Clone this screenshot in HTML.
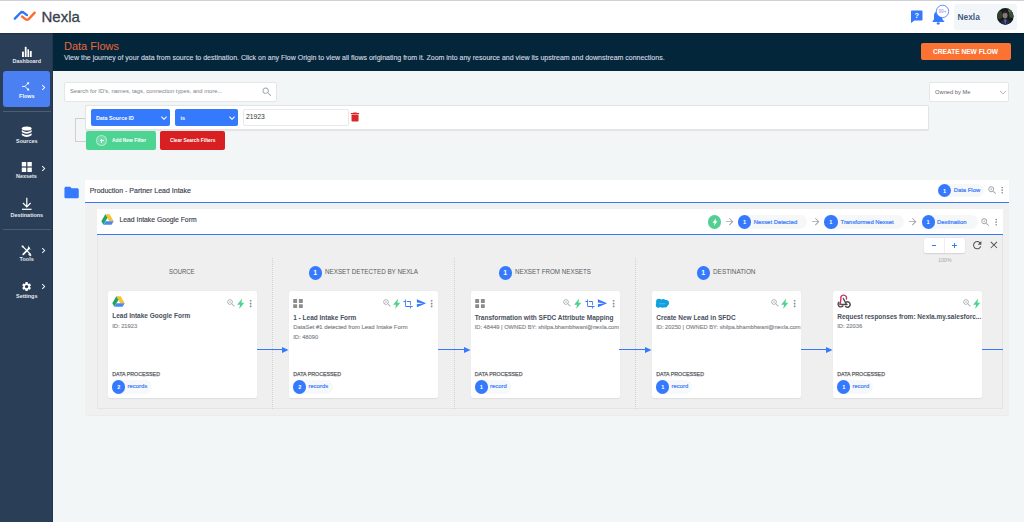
<!DOCTYPE html>
<html><head><meta charset="utf-8">
<style>
*{margin:0;padding:0;box-sizing:border-box}
html,body{width:1024px;height:522px;overflow:hidden;background:#f3f6f7;font-family:"Liberation Sans",sans-serif;position:relative}
.a{position:absolute}
.t{position:absolute;line-height:1;white-space:nowrap}
svg{position:absolute;overflow:visible}
</style></head><body>
<div class="a" style="left:0px;top:0px;width:1024px;height:1px;background:#cdd0d6;"></div>
<div class="a" style="left:0px;top:1px;width:1024px;height:32px;background:#fff;"></div>
<svg style="left:0px;top:0px;" width="40" height="30"><g fill="none" stroke-width="2.4" stroke-linecap="round" stroke-linejoin="round"><path d="M14.8 18.6 L20.3 13 Q22.1 11.3 24 12.9 L26.9 15.1" stroke="#2f74fd"/><path d="M22.1 16.5 L25.4 19.1 Q27.2 20.4 28.9 18.8 L34.7 12.7" stroke="#fd6e2e"/></g></svg>
<div class="t" style="left:41.5px;top:9px;font-size:15px;color:#3a3f4d;-webkit-text-stroke:0.3px #3a3f4d">Nexla</div>
<svg style="left:910px;top:10px;" width="14" height="14"><path d="M1.5 0.5 H11.5 Q12.5 0.5 12.5 1.5 V9.5 Q12.5 10.5 11.5 10.5 H4.5 L1 13 V1.5 Q1 0.5 1.5 0.5Z" fill="#3579fd"/><text x="6.8" y="8.3" font-size="7.5" font-weight="bold" fill="#fff" text-anchor="middle" font-family="Liberation Sans">?</text></svg>
<svg style="left:931px;top:4px;" width="20" height="22"><path d="M3 15.2 V11.5 Q3 7.6 7.2 7.6 Q11.4 7.6 11.4 11.5 V15.2 L13.6 18.1 H1.3Z" fill="#3579fd"/><ellipse cx="7.2" cy="19.4" rx="1.5" ry="1.2" fill="#3579fd"/><circle cx="11.5" cy="7.4" r="6.2" fill="#fff" stroke="#3579fd" stroke-width="0.8"/><text x="11.5" y="9.2" font-size="4.8" fill="#9f8ce6" text-anchor="middle" font-family="Liberation Sans">99+</text></svg>
<div class="a" style="left:954px;top:3.5px;width:63px;height:26px;background:#f3f6f9;border-radius:3px"></div>
<div class="t" style="left:957.50px;top:13px;font-size:8.4px;color:#3f5b80;font-weight:bold;">Nexla</div>
<svg style="left:996.6px;top:8.1px;" width="17" height="17"><defs><clipPath id="av"><circle cx="8.3" cy="8.4" r="8.3"/></clipPath></defs><g clip-path="url(#av)"><rect width="17" height="17" fill="#161c1e"/><ellipse cx="2.5" cy="7" rx="3" ry="4" fill="#2f3f2c"/><ellipse cx="14.5" cy="6" rx="2.6" ry="4" fill="#3a4a35"/><ellipse cx="13" cy="2.5" rx="2" ry="2" fill="#55634c"/><path d="M2.5 17 Q3.5 11.5 8.3 11.2 Q13.2 11.5 14.2 17Z" fill="#252b48"/><path d="M7 11.6 L8.3 17 L9.6 11.6Z" fill="#5a68a0"/><ellipse cx="8.1" cy="7.2" rx="2.4" ry="3.3" fill="#8c7676"/><path d="M5.7 5.6 Q6 3 8.2 3 Q10.6 3 10.6 5.6 Q9 4.6 5.7 5.6Z" fill="#2a2628"/></g></svg>
<div class="a" style="left:0px;top:33px;width:53px;height:489px;background:#2b3e57;"></div>
<div class="a" style="left:52px;top:33px;width:1px;height:489px;background:#23364f;"></div>
<svg style="left:21px;top:46px;" width="12" height="12"><g fill="#fff"><rect x="1" y="5.6" width="1.9" height="5.4"/><rect x="3.8" y="0.8" width="1.8" height="10.2"/><rect x="6.4" y="3.3" width="1.6" height="7.7"/><rect x="8.8" y="5" width="1.9" height="6"/></g></svg>
<div class="t" style="left:12.60px;top:59px;font-size:5.45px;color:#e6e9ee;font-weight:bold;">Dashboard</div>
<div class="a" style="left:3px;top:71px;width:47px;height:35.5px;background:#4a80f2;border-radius:3px"></div>
<svg style="left:21px;top:81px;" width="12" height="11"><g fill="none" stroke="#fff" stroke-width="0.9"><path d="M1 5.4 H4 L7 2.2 M4 5.4 L7 8.6"/></g><rect x="6.2" y="1.3" width="1.9" height="1.9" fill="#fff"/><rect x="6.2" y="7.6" width="1.9" height="1.9" fill="#fff"/></svg>
<svg style="left:38.10px;top:82.20px" width="11.00" height="11.00" viewBox="0 0 24 24" preserveAspectRatio="none"><path d="M10 6L8.59 7.41 13.17 12l-4.58 4.59L10 18l6-6z" fill="#fff"/></svg>
<div class="t" style="left:19.10px;top:94px;font-size:5.45px;color:#fff;font-weight:bold;">Flows</div>
<div class="a" style="left:3px;top:111px;width:48px;height:1px;background:#4d5e74;"></div>
<svg style="left:21px;top:125.8px;" width="12" height="13"><g fill="#fff"><ellipse cx="5.7" cy="2.5" rx="4.9" ry="2.1"/><path d="M0.8 4.1 Q5.7 7.8 10.6 4.1 V6.1 Q5.7 9.6 0.8 6.1Z"/><path d="M0.8 7.3 Q5.7 10.9 10.6 7.3 V9.2 Q5.7 12.6 0.8 9.2Z"/></g></svg>
<div class="t" style="left:16.00px;top:139px;font-size:5.45px;color:#e6e9ee;font-weight:bold;">Sources</div>
<svg style="left:21px;top:161px;" width="12" height="12"><g fill="#fff"><rect x="0.8" y="1" width="4.4" height="4.4"/><rect x="6.4" y="1" width="4.4" height="4.4"/><rect x="0.8" y="6.6" width="4.4" height="4.4"/><rect x="6.4" y="6.6" width="4.4" height="4.4"/></g></svg>
<svg style="left:38.10px;top:162.90px" width="11.00" height="11.00" viewBox="0 0 24 24" preserveAspectRatio="none"><path d="M10 6L8.59 7.41 13.17 12l-4.58 4.59L10 18l6-6z" fill="#fff"/></svg>
<div class="t" style="left:16.00px;top:174px;font-size:5.45px;color:#e6e9ee;font-weight:bold;">Nexsets</div>
<svg style="left:21px;top:197px;" width="12" height="14"><g fill="none" stroke="#fff" stroke-width="1.2"><path d="M5.8 0.8 V9.5 M2 6 L5.8 9.8 L9.6 6"/><path d="M1 12.3 H10.6"/></g></svg>
<div class="t" style="left:10.50px;top:213px;font-size:5.45px;color:#e6e9ee;font-weight:bold;">Destinations</div>
<div class="a" style="left:3px;top:229px;width:48px;height:1px;background:#4d5e74;"></div>
<svg style="left:21px;top:245px;" width="12" height="11"><g stroke="#fff" stroke-linecap="round" fill="none"><path d="M2.2 9.4 L8.2 3.2" stroke-width="1.7"/><path d="M1.6 1.4 L9.6 9.4" stroke-width="1.3"/></g><path d="M7.2 0.6 A2.6 2.6 0 0 0 10.9 4 L9.6 4.2 L8.1 2.8Z" fill="#fff"/><path d="M0.6 0.4 L2.6 0.8 L2.2 2.4 L0.8 2.2Z" fill="#fff"/><path d="M7.8 8.6 L10.6 10.8 L9.2 11.2 L7.2 9.4Z" fill="#fff"/></svg>
<svg style="left:38.10px;top:245.20px" width="11.00" height="11.00" viewBox="0 0 24 24" preserveAspectRatio="none"><path d="M10 6L8.59 7.41 13.17 12l-4.58 4.59L10 18l6-6z" fill="#fff"/></svg>
<div class="t" style="left:19.60px;top:257px;font-size:5.45px;color:#e6e9ee;font-weight:bold;">Tools</div>
<svg style="left:20.70px;top:281.20px" width="11.20" height="11.20" viewBox="0 0 24 24" preserveAspectRatio="none"><path d="M19.14 12.94c.04-.3.06-.61.06-.94 0-.32-.02-.64-.07-.94l2.03-1.58c.18-.14.23-.41.12-.61l-1.92-3.32c-.12-.22-.37-.29-.59-.22l-2.39.96c-.5-.38-1.03-.7-1.62-.94l-.36-2.54c-.04-.24-.24-.41-.48-.41h-3.84c-.24 0-.43.17-.47.41l-.36 2.54c-.59.24-1.13.57-1.62.94l-2.39-.96c-.22-.08-.47 0-.59.22L2.74 8.87c-.12.21-.08.47.12.61l2.03 1.58c-.05.3-.09.63-.09.94s.02.64.07.94l-2.03 1.58c-.18.14-.23.41-.12.61l1.92 3.32c.12.22.37.29.59.22l2.39-.96c.5.38 1.03.7 1.62.94l.36 2.54c.05.24.24.41.48.41h3.84c.24 0 .44-.17.47-.41l.36-2.54c.59-.24 1.13-.56 1.62-.94l2.39.96c.22.08.47 0 .59-.22l1.92-3.32c.12-.22.07-.47-.12-.61l-2.01-1.58zM12 15.6c-1.98 0-3.6-1.62-3.6-3.6s1.62-3.6 3.6-3.6 3.6 1.62 3.6 3.6-1.62 3.6-3.6 3.6z" fill="#fff"/></svg>
<svg style="left:38.10px;top:281.20px" width="11.00" height="11.00" viewBox="0 0 24 24" preserveAspectRatio="none"><path d="M10 6L8.59 7.41 13.17 12l-4.58 4.59L10 18l6-6z" fill="#fff"/></svg>
<div class="t" style="left:16.00px;top:294px;font-size:5.45px;color:#e6e9ee;font-weight:bold;">Settings</div>
<div class="a" style="left:53px;top:33px;width:971px;height:38px;background:#03263a;"></div>
<div class="a" style="left:0px;top:33px;width:1024px;height:2px;background:linear-gradient(rgba(0,0,0,0.28),rgba(0,0,0,0));"></div>
<div class="t" style="left:64.00px;top:41px;font-size:11px;color:#e8673c;">Data Flows</div>
<div class="t" style="left:64.00px;top:54px;font-size:7px;color:#d3dae0;-webkit-text-stroke:0.12px #d3dae0;">View the journey of your data from source to destination. Click on any Flow Origin to view all flows originating from it. Zoom into any resource and view its upstream and downstream connections.</div>
<div class="a" style="left:920.5px;top:43px;width:90.5px;height:17px;background:#fb7233;border-radius:2px"></div>
<div class="t" style="left:933.00px;top:49px;font-size:6.6px;color:#fff;font-weight:bold;">CREATE NEW FLOW</div>
<div class="a" style="left:64px;top:82px;width:213px;height:19.5px;background:#fff;border:1px solid #e4e6e8;border-radius:2px"></div>
<div class="t" style="left:70.00px;top:89px;font-size:5.8px;color:#7d8185;">Search for ID's, names, tags, connection types, and more...</div>
<svg style="left:261.20px;top:86.00px" width="11.80" height="11.80" viewBox="0 0 24 24" preserveAspectRatio="none"><path d="M15.5 14h-.79l-.28-.27C15.41 12.59 16 11.11 16 9.5 16 5.91 13.09 3 9.5 3S3 5.91 3 9.5 5.91 16 9.5 16c1.61 0 3.09-.59 4.23-1.57l.27.28v.79l5 4.99L20.49 19l-4.99-5zm-6 0C7.01 14 5 11.99 5 9.5S7.01 5 9.5 5 14 7.01 14 9.5 11.99 14 9.5 14z" fill="#a0a4a8"/></svg>
<div class="a" style="left:929px;top:82px;width:80px;height:19.5px;background:#fff;border:1px solid #e4e6e8;border-radius:2px"></div>
<div class="t" style="left:935.00px;top:89px;font-size:6.2px;color:#5f6368;transform:scaleX(0.93);transform-origin:0 0;">Owned by Me</div>
<svg style="left:999px;top:90px;" width="8" height="5"><path d="M1 1 L4 3.8 L7 1" fill="none" stroke="#9a9ea3" stroke-width="0.8"/></svg>
<div class="a" style="left:75px;top:117.5px;width:11px;height:24.5px;background:transparent;border:1px solid #cfcfcf;border-right:none"></div>
<div class="a" style="left:85px;top:104.5px;width:844px;height:25.5px;background:#fff;border:1px solid #e2e4e7;border-radius:2px;box-shadow:0 0.8px 1px rgba(0,0,0,0.07)"></div>
<div class="a" style="left:91px;top:109.3px;width:79px;height:17px;background:#3579fd;border-radius:2px"></div>
<div class="t" style="left:96.00px;top:116px;font-size:5.5px;color:#fff;font-weight:bold;transform:scaleX(0.97);transform-origin:0 0;">Data Source ID</div>
<svg style="left:158.40px;top:112.00px" width="12.00" height="12.00" viewBox="0 0 24 24" preserveAspectRatio="none"><path d="M16.59 8.59L12 13.17 7.41 8.59 6 10l6 6 6-6z" fill="#fff"/></svg>
<div class="a" style="left:175px;top:109.4px;width:62.8px;height:17px;background:#3579fd;border-radius:2px"></div>
<div class="t" style="left:180.50px;top:116px;font-size:5.5px;color:#fff;font-weight:bold;">is</div>
<svg style="left:226.20px;top:112.00px" width="12.00" height="12.00" viewBox="0 0 24 24" preserveAspectRatio="none"><path d="M16.59 8.59L12 13.17 7.41 8.59 6 10l6 6 6-6z" fill="#fff"/></svg>
<div class="a" style="left:242.7px;top:109px;width:106.3px;height:16.7px;background:#fff;border:1px solid #e8e9eb;border-radius:2px"></div>
<div class="t" style="left:245.50px;top:113px;font-size:7.5px;color:#333;transform:scaleX(0.9);transform-origin:0 0;">21923</div>
<svg style="left:348.30px;top:110.70px" width="14.06" height="12.10" viewBox="0 0 24 24" preserveAspectRatio="none"><path d="M6 19c0 1.1.9 2 2 2h8c1.1 0 2-.9 2-2V7H6v12zM19 4h-3.5l-1-1h-5l-1 1H5v2h14V4z" fill="#d9262c"/></svg>
<div class="a" style="left:86.4px;top:131px;width:69.4px;height:19.4px;background:#4ed492;border-radius:2px"></div>
<div class="a" style="left:96.1px;top:135.1px;width:11px;height:11px;background:rgba(255,255,255,0.18);border-radius:50%;border:0.8px solid rgba(255,255,255,0.45)"></div>
<div class="a" style="left:99.6px;top:140.2px;width:4px;height:0.8px;background:#fff;"></div>
<div class="a" style="left:101.2px;top:138.6px;width:0.8px;height:4px;background:#fff;"></div>
<div class="t" style="left:112.00px;top:138px;font-size:5.2px;color:#fff;font-weight:bold;transform:scaleX(0.94);transform-origin:0 0;">Add New Filter</div>
<div class="a" style="left:160.1px;top:131px;width:64.9px;height:19.3px;background:#d81f22;border-radius:2px"></div>
<div class="t" style="left:169.70px;top:138px;font-size:5.2px;color:#fff;font-weight:bold;transform:scaleX(0.93);transform-origin:0 0;">Clear Search Filters</div>
<svg style="left:63.30px;top:184.00px" width="17.20" height="17.20" viewBox="0 0 24 24" preserveAspectRatio="none"><path d="M10 4H4c-1.1 0-1.99.9-1.99 2L2 18c0 1.1.9 2 2 2h16c1.1 0 2-.9 2-2V8c0-1.1-.9-2-2-2h-8l-2-2z" fill="#3579fd"/></svg>
<div class="a" style="left:85.2px;top:180.2px;width:924px;height:235.0px;background:#f0f0f0;box-shadow:0 0.5px 1px rgba(0,0,0,0.04)"></div>
<div class="a" style="left:85.2px;top:180.2px;width:924px;height:23.2px;background:#fff;border-bottom:1.6px solid #3579fd"></div>
<div class="t" style="left:89.70px;top:187px;font-size:7px;color:#3c4250;-webkit-text-stroke:0.15px #3c4250;">Production - Partner Lead Intake</div>
<div class="a" style="left:938px;top:184.05px;width:46.3px;height:13.3px;background:#f6f7f8;border-radius:7px"></div>
<div class="a" style="left:938px;top:184.05px;width:13.3px;height:13.3px;background:#3579fd;border-radius:50%"></div>
<div class="t" style="left:942.90px;top:189px;font-size:5.6px;color:#fff;font-weight:bold;">1</div>
<div class="t" style="left:953.70px;top:188px;font-size:5.9px;color:#3579fd;-webkit-text-stroke:0.2px #3579fd;">Data Flow</div>
<svg style="left:986.60px;top:184.80px" width="10.70" height="10.70" viewBox="0 0 24 24" preserveAspectRatio="none"><path d="M15.5 14h-.79l-.28-.27C15.41 12.59 16 11.11 16 9.5 16 5.91 13.09 3 9.5 3S3 5.91 3 9.5 5.91 16 9.5 16c1.61 0 3.09-.59 4.23-1.57l.27.28v.79l5 4.99L20.49 19l-4.99-5zm-6 0C7.01 14 5 11.99 5 9.5S7.01 5 9.5 5 14 7.01 14 9.5 11.99 14 9.5 14zm2.5-4h-2v2H9v-2H7V9h2V7h1v2h2v1z" fill="#a3a6aa"/></svg>
<svg style="left:997.40px;top:185.40px" width="10.35" height="10.35" viewBox="0 0 24 24" preserveAspectRatio="none"><path d="M12 8c1.1 0 2-.9 2-2s-.9-2-2-2-2 .9-2 2 .9 2 2 2zm0 2c-1.1 0-2 .9-2 2s.9 2 2 2 2-.9 2-2-.9-2-2-2zm0 6c-1.1 0-2 .9-2 2s.9 2 2 2 2-.9 2-2-.9-2-2-2z" fill="#8a8d92"/></svg>
<div class="a" style="left:97px;top:209px;width:906px;height:199.5px;background:#efefef;border-left:1px solid #e6e6e6;border-right:1px solid #e4e4e4;border-bottom:1px solid #e4e4e4"></div>
<div class="a" style="left:97px;top:209px;width:906px;height:25.6px;background:#fff;border-bottom:1.6px solid #3579fd"></div>
<svg style="left:101.2px;top:214px;" width="13" height="11"><path d="M4.3 0.3 H8.7 L12.7 7.2 H8.3Z" fill="#f9c22e"/><path d="M4.3 0.3 L0.3 7.2 L2.5 10.7 L6.5 3.8Z" fill="#1fa463"/><path d="M2.5 10.7 H10.5 L12.7 7.2 H4.7Z" fill="#4688f4"/></svg>
<div class="t" style="left:119.50px;top:217px;font-size:6.8px;color:#3c4250;-webkit-text-stroke:0.15px #3c4250;">Lead Intake Google Form</div>
<div class="a" style="left:707.5px;top:215.3px;width:13.7px;height:13.7px;background:#54cf93;border-radius:50%"></div>
<svg style="left:710.60px;top:218.20px" width="8.00" height="8.00" viewBox="0 0 512 512" preserveAspectRatio="none"><path d="M315.27 33L96 304h128l-31.51 173.23a2.36 2.36 0 002.33 2.77h0a2.36 2.36 0 001.89-.95L416 208H288l31.66-173.25a2.45 2.45 0 00-2.44-2.75h0a2.42 2.42 0 00-1.95 1z" fill="#fff"/></svg>
<svg style="left:723.82px;top:216.16px" width="11.25" height="11.25" viewBox="0 0 24 24" preserveAspectRatio="none"><path d="M12 4l-1.41 1.41L16.17 11H4v2h12.17l-5.58 5.59L12 20l8-8z" fill="#a4a7ab"/></svg>
<div class="a" style="left:738px;top:215.45px;width:69.2px;height:13.3px;background:#f6f7f8;border-radius:7px"></div>
<div class="a" style="left:738px;top:215.45px;width:13.3px;height:13.3px;background:#3579fd;border-radius:50%"></div>
<div class="t" style="left:742.90px;top:220px;font-size:5.6px;color:#fff;font-weight:bold;">1</div>
<div class="t" style="left:753.70px;top:220px;font-size:5.9px;color:#3579fd;-webkit-text-stroke:0.2px #3579fd;">Nexset Detected</div>
<svg style="left:810.12px;top:216.16px" width="11.25" height="11.25" viewBox="0 0 24 24" preserveAspectRatio="none"><path d="M12 4l-1.41 1.41L16.17 11H4v2h12.17l-5.58 5.59L12 20l8-8z" fill="#a4a7ab"/></svg>
<div class="a" style="left:824.4px;top:215.45px;width:79.5px;height:13.3px;background:#f6f7f8;border-radius:7px"></div>
<div class="a" style="left:824.4px;top:215.45px;width:13.3px;height:13.3px;background:#3579fd;border-radius:50%"></div>
<div class="t" style="left:829.30px;top:220px;font-size:5.6px;color:#fff;font-weight:bold;">1</div>
<div class="t" style="left:840.50px;top:220px;font-size:5.9px;color:#3579fd;-webkit-text-stroke:0.2px #3579fd;">Transformed Nexset</div>
<svg style="left:907.12px;top:216.16px" width="11.25" height="11.25" viewBox="0 0 24 24" preserveAspectRatio="none"><path d="M12 4l-1.41 1.41L16.17 11H4v2h12.17l-5.58 5.59L12 20l8-8z" fill="#a4a7ab"/></svg>
<div class="a" style="left:921.5px;top:215.45px;width:56.1px;height:13.3px;background:#f6f7f8;border-radius:7px"></div>
<div class="a" style="left:921.5px;top:215.45px;width:13.3px;height:13.3px;background:#3579fd;border-radius:50%"></div>
<div class="t" style="left:926.40px;top:220px;font-size:5.6px;color:#fff;font-weight:bold;">1</div>
<div class="t" style="left:937.00px;top:220px;font-size:5.9px;color:#3579fd;-webkit-text-stroke:0.2px #3579fd;">Destination</div>
<svg style="left:980.10px;top:216.90px" width="10.70" height="10.70" viewBox="0 0 24 24" preserveAspectRatio="none"><path d="M15.5 14h-.79l-.28-.27C15.41 12.59 16 11.11 16 9.5 16 5.91 13.09 3 9.5 3S3 5.91 3 9.5 5.91 16 9.5 16c1.61 0 3.09-.59 4.23-1.57l.27.28v.79l5 4.99L20.49 19l-4.99-5zm-6 0C7.01 14 5 11.99 5 9.5S7.01 5 9.5 5 14 7.01 14 9.5 11.99 14 9.5 14zm2.5-4h-2v2H9v-2H7V9h2V7h1v2h2v1z" fill="#a3a6aa"/></svg>
<svg style="left:991.00px;top:216.80px" width="10.35" height="10.35" viewBox="0 0 24 24" preserveAspectRatio="none"><path d="M12 8c1.1 0 2-.9 2-2s-.9-2-2-2-2 .9-2 2 .9 2 2 2zm0 2c-1.1 0-2 .9-2 2s.9 2 2 2 2-.9 2-2-.9-2-2-2zm0 6c-1.1 0-2 .9-2 2s.9 2 2 2 2-.9 2-2-.9-2-2-2z" fill="#8a8d92"/></svg>
<div class="a" style="left:924px;top:238.2px;width:41.2px;height:14.8px;background:#fff;border-radius:2px;box-shadow:0 0.5px 1.5px rgba(0,0,0,0.12)"></div>
<div class="a" style="left:944px;top:238.2px;width:1px;height:14.8px;background:#eeeeee;"></div>
<div class="a" style="left:931.8px;top:245.2px;width:4.4px;height:0.9px;background:#3579fd;"></div>
<div class="a" style="left:952.4px;top:245.2px;width:4.4px;height:0.9px;background:#3579fd;"></div>
<div class="a" style="left:954.15px;top:243.4px;width:0.9px;height:4.4px;background:#3579fd;"></div>
<svg style="left:970.80px;top:239.10px" width="12.45" height="12.45" viewBox="0 0 24 24" preserveAspectRatio="none"><path d="M17.65 6.35C16.2 4.9 14.21 4 12 4c-4.42 0-7.99 3.58-7.99 8s3.57 8 7.99 8c3.73 0 6.84-2.55 7.73-6h-2.08c-.82 2.33-3.04 4-5.65 4-3.31 0-6-2.69-6-6s2.69-6 6-6c1.66 0 3.14.69 4.22 1.78L13 11h7V4l-2.35 2.35z" fill="#555"/></svg>
<svg style="left:988.20px;top:239.40px" width="11.80" height="11.80" viewBox="0 0 24 24" preserveAspectRatio="none"><path d="M19 6.41L17.59 5 12 10.59 6.41 5 5 6.41 10.59 12 5 17.59 6.41 19 12 13.41 17.59 19 19 17.59 13.41 12z" fill="#555"/></svg>
<div class="t" style="left:938.30px;top:258px;font-size:5.2px;color:#a6a6a6;">100%</div>
<div class="a" style="left:272.0px;top:258px;width:0px;height:150.5px;background:transparent;border-left:1px dotted #d2d2d2"></div>
<div class="a" style="left:453.5px;top:258px;width:0px;height:150.5px;background:transparent;border-left:1px dotted #d2d2d2"></div>
<div class="a" style="left:634.9px;top:258px;width:0px;height:150.5px;background:transparent;border-left:1px dotted #d2d2d2"></div>
<div class="t" style="left:169.40px;top:269px;font-size:6.8px;color:#575b61;transform:scaleX(0.88);transform-origin:0 0;">SOURCE</div>
<div class="a" style="left:308.7px;top:266.05px;width:13.5px;height:13.5px;background:#3579fd;border-radius:50%"></div>
<div class="t" style="left:313.20px;top:269px;font-size:7px;color:#fff;font-weight:bold;">1</div>
<div class="t" style="left:324.80px;top:269px;font-size:6.8px;color:#575b61;transform:scaleX(0.925);transform-origin:0 0;">NEXSET DETECTED BY NEXLA</div>
<div class="a" style="left:498.7px;top:266.05px;width:13.5px;height:13.5px;background:#3579fd;border-radius:50%"></div>
<div class="t" style="left:503.20px;top:269px;font-size:7px;color:#fff;font-weight:bold;">1</div>
<div class="t" style="left:514.80px;top:269px;font-size:6.8px;color:#575b61;transform:scaleX(0.92);transform-origin:0 0;">NEXSET FROM NEXSETS</div>
<div class="a" style="left:696.8px;top:266.05px;width:13.5px;height:13.5px;background:#3579fd;border-radius:50%"></div>
<div class="t" style="left:701.30px;top:269px;font-size:7px;color:#fff;font-weight:bold;">1</div>
<div class="t" style="left:713.00px;top:269px;font-size:6.8px;color:#575b61;transform:scaleX(0.94);transform-origin:0 0;">DESTINATION</div>
<div class="a" style="left:108px;top:291px;width:149px;height:106.5px;background:#fff;border-radius:2px;box-shadow:0 0.6px 1.2px rgba(0,0,0,0.07)"></div>
<svg style="left:112px;top:296.2px;" width="13" height="11"><path d="M4.3 0.3 H8.7 L12.7 7.2 H8.3Z" fill="#f9c22e"/><path d="M4.3 0.3 L0.3 7.2 L2.5 10.7 L6.5 3.8Z" fill="#1fa463"/><path d="M2.5 10.7 H10.5 L12.7 7.2 H4.7Z" fill="#4688f4"/></svg>
<svg style="left:225.63px;top:297.70px" width="10.15" height="10.15" viewBox="0 0 24 24" preserveAspectRatio="none"><path d="M15.5 14h-.79l-.28-.27C15.41 12.59 16 11.11 16 9.5 16 5.91 13.09 3 9.5 3S3 5.91 3 9.5 5.91 16 9.5 16c1.61 0 3.09-.59 4.23-1.57l.27.28v.79l5 4.99L20.49 19l-4.99-5zm-6 0C7.01 14 5 11.99 5 9.5S7.01 5 9.5 5 14 7.01 14 9.5 11.99 14 9.5 14zm2.5-4h-2v2H9v-2H7V9h2V7h1v2h2v1z" fill="#a9acb0"/></svg>
<svg style="left:234.96px;top:297.96px" width="11.40" height="11.40" viewBox="0 0 512 512" preserveAspectRatio="none"><path d="M315.27 33L96 304h128l-31.51 173.23a2.36 2.36 0 002.33 2.77h0a2.36 2.36 0 001.89-.95L416 208H288l31.66-173.25a2.45 2.45 0 00-2.44-2.75h0a2.42 2.42 0 00-1.95 1z" fill="#4cd38e"/></svg>
<svg style="left:244.95px;top:298.10px" width="11.30" height="11.30" viewBox="0 0 24 24" preserveAspectRatio="none"><path d="M12 8c1.1 0 2-.9 2-2s-.9-2-2-2-2 .9-2 2 .9 2 2 2zm0 2c-1.1 0-2 .9-2 2s.9 2 2 2 2-.9 2-2-.9-2-2-2zm0 6c-1.1 0-2 .9-2 2s.9 2 2 2 2-.9 2-2-.9-2-2-2z" fill="#8a8d92"/></svg>
<div class="t" style="left:112.20px;top:313px;font-size:6.5px;color:#48505c;font-weight:bold;">Lead Intake Google Form</div>
<div class="t" style="left:112.20px;top:324px;font-size:5.75px;color:#83878c;-webkit-text-stroke:0.15px #83878c;">ID: 21923</div>
<div class="t" style="left:112.20px;top:372px;font-size:5.3px;color:#5f6368;-webkit-text-stroke:0.25px #5f6368;">DATA PROCESSED</div>
<div class="a" style="left:112.2px;top:380.4px;width:39.5px;height:13.2px;background:#f7f8f9;border-radius:7px"></div>
<div class="a" style="left:112.2px;top:380.4px;width:13.2px;height:13.2px;background:#3579fd;border-radius:50%"></div>
<div class="t" style="left:117.20px;top:385px;font-size:5.6px;color:#fff;font-weight:bold;">2</div>
<div class="t" style="left:127.60px;top:384px;font-size:5.9px;color:#3579fd;-webkit-text-stroke:0.15px #3579fd;">records</div>
<div class="a" style="left:289px;top:291px;width:149px;height:106.5px;background:#fff;border-radius:2px;box-shadow:0 0.6px 1.2px rgba(0,0,0,0.07)"></div>
<svg style="left:293.2px;top:299px;" width="10" height="10"><g fill="#8c8c8c"><rect x="0.2" y="0" width="3.9" height="3.9" rx="0.5"/><rect x="5.9" y="0" width="3.9" height="3.9" rx="0.5"/><rect x="0.2" y="5.2" width="3.9" height="3.9" rx="0.5"/><rect x="5.9" y="5.2" width="3.9" height="3.9" rx="0.5"/></g></svg>
<svg style="left:381.53px;top:297.70px" width="10.15" height="10.15" viewBox="0 0 24 24" preserveAspectRatio="none"><path d="M15.5 14h-.79l-.28-.27C15.41 12.59 16 11.11 16 9.5 16 5.91 13.09 3 9.5 3S3 5.91 3 9.5 5.91 16 9.5 16c1.61 0 3.09-.59 4.23-1.57l.27.28v.79l5 4.99L20.49 19l-4.99-5zm-6 0C7.01 14 5 11.99 5 9.5S7.01 5 9.5 5 14 7.01 14 9.5 11.99 14 9.5 14zm2.5-4h-2v2H9v-2H7V9h2V7h1v2h2v1z" fill="#a9acb0"/></svg>
<svg style="left:390.96px;top:297.96px" width="11.40" height="11.40" viewBox="0 0 512 512" preserveAspectRatio="none"><path d="M315.27 33L96 304h128l-31.51 173.23a2.36 2.36 0 002.33 2.77h0a2.36 2.36 0 001.89-.95L416 208H288l31.66-173.25a2.45 2.45 0 00-2.44-2.75h0a2.42 2.42 0 00-1.95 1z" fill="#4cd38e"/></svg>
<svg style="left:403.48px;top:298.60px" width="10.04" height="10.04" viewBox="0 0 24 24" preserveAspectRatio="none"><path d="M17 15h2V7c0-1.1-.9-2-2-2H9v2h8v8zM7 17V1H5v4H1v2h4v10c0 1.1.9 2 2 2h10v4h2v-4h4v-2H7z" fill="#3579fd"/></svg>
<svg style="left:415.72px;top:298.40px" width="10.50" height="10.50" viewBox="0 0 24 24" preserveAspectRatio="none"><path d="M2.01 21L23 12 2.01 3 2 10l15 2-15 2z" fill="#3579fd"/></svg>
<svg style="left:426.45px;top:298.10px" width="11.30" height="11.30" viewBox="0 0 24 24" preserveAspectRatio="none"><path d="M12 8c1.1 0 2-.9 2-2s-.9-2-2-2-2 .9-2 2 .9 2 2 2zm0 2c-1.1 0-2 .9-2 2s.9 2 2 2 2-.9 2-2-.9-2-2-2zm0 6c-1.1 0-2 .9-2 2s.9 2 2 2 2-.9 2-2-.9-2-2-2z" fill="#8a8d92"/></svg>
<div class="t" style="left:293.20px;top:315px;font-size:6.5px;color:#48505c;font-weight:bold;">1 - Lead Intake Form</div>
<div class="t" style="left:293.20px;top:325px;font-size:5.87px;color:#83878c;-webkit-text-stroke:0.15px #83878c;">DataSet #1 detected from Lead Intake Form</div>
<div class="t" style="left:293.20px;top:335px;font-size:5.75px;color:#83878c;-webkit-text-stroke:0.15px #83878c;">ID: 48090</div>
<div class="t" style="left:293.20px;top:372px;font-size:5.3px;color:#5f6368;-webkit-text-stroke:0.25px #5f6368;">DATA PROCESSED</div>
<div class="a" style="left:293.2px;top:380.4px;width:39.5px;height:13.2px;background:#f7f8f9;border-radius:7px"></div>
<div class="a" style="left:293.2px;top:380.4px;width:13.2px;height:13.2px;background:#3579fd;border-radius:50%"></div>
<div class="t" style="left:298.20px;top:385px;font-size:5.6px;color:#fff;font-weight:bold;">2</div>
<div class="t" style="left:308.60px;top:384px;font-size:5.9px;color:#3579fd;-webkit-text-stroke:0.15px #3579fd;">records</div>
<div class="a" style="left:470.5px;top:291px;width:149px;height:106.5px;background:#fff;border-radius:2px;box-shadow:0 0.6px 1.2px rgba(0,0,0,0.07)"></div>
<svg style="left:474.6px;top:299px;" width="10" height="10"><g fill="#8c8c8c"><rect x="0.2" y="0" width="3.9" height="3.9" rx="0.5"/><rect x="5.9" y="0" width="3.9" height="3.9" rx="0.5"/><rect x="0.2" y="5.2" width="3.9" height="3.9" rx="0.5"/><rect x="5.9" y="5.2" width="3.9" height="3.9" rx="0.5"/></g></svg>
<svg style="left:562.43px;top:297.70px" width="10.15" height="10.15" viewBox="0 0 24 24" preserveAspectRatio="none"><path d="M15.5 14h-.79l-.28-.27C15.41 12.59 16 11.11 16 9.5 16 5.91 13.09 3 9.5 3S3 5.91 3 9.5 5.91 16 9.5 16c1.61 0 3.09-.59 4.23-1.57l.27.28v.79l5 4.99L20.49 19l-4.99-5zm-6 0C7.01 14 5 11.99 5 9.5S7.01 5 9.5 5 14 7.01 14 9.5 11.99 14 9.5 14zm2.5-4h-2v2H9v-2H7V9h2V7h1v2h2v1z" fill="#a9acb0"/></svg>
<svg style="left:572.46px;top:297.96px" width="11.40" height="11.40" viewBox="0 0 512 512" preserveAspectRatio="none"><path d="M315.27 33L96 304h128l-31.51 173.23a2.36 2.36 0 002.33 2.77h0a2.36 2.36 0 001.89-.95L416 208H288l31.66-173.25a2.45 2.45 0 00-2.44-2.75h0a2.42 2.42 0 00-1.95 1z" fill="#4cd38e"/></svg>
<svg style="left:584.78px;top:298.60px" width="10.04" height="10.04" viewBox="0 0 24 24" preserveAspectRatio="none"><path d="M17 15h2V7c0-1.1-.9-2-2-2H9v2h8v8zM7 17V1H5v4H1v2h4v10c0 1.1.9 2 2 2h10v4h2v-4h4v-2H7z" fill="#3579fd"/></svg>
<svg style="left:597.12px;top:298.40px" width="10.50" height="10.50" viewBox="0 0 24 24" preserveAspectRatio="none"><path d="M2.01 21L23 12 2.01 3 2 10l15 2-15 2z" fill="#3579fd"/></svg>
<svg style="left:607.65px;top:298.10px" width="11.30" height="11.30" viewBox="0 0 24 24" preserveAspectRatio="none"><path d="M12 8c1.1 0 2-.9 2-2s-.9-2-2-2-2 .9-2 2 .9 2 2 2zm0 2c-1.1 0-2 .9-2 2s.9 2 2 2 2-.9 2-2-.9-2-2-2zm0 6c-1.1 0-2 .9-2 2s.9 2 2 2 2-.9 2-2-.9-2-2-2z" fill="#8a8d92"/></svg>
<div class="t" style="left:474.70px;top:315px;font-size:6.5px;color:#48505c;font-weight:bold;">Transformation with SFDC Attribute Mapping</div>
<div class="t" style="left:474.70px;top:325px;font-size:5.72px;color:#83878c;-webkit-text-stroke:0.15px #83878c;">ID: 48449 | OWNED BY: shilpa.bhambhwani@nexla.com</div>
<div class="t" style="left:474.70px;top:372px;font-size:5.3px;color:#5f6368;-webkit-text-stroke:0.25px #5f6368;">DATA PROCESSED</div>
<div class="a" style="left:474.7px;top:380.4px;width:36px;height:13.2px;background:#f7f8f9;border-radius:7px"></div>
<div class="a" style="left:474.7px;top:380.4px;width:13.2px;height:13.2px;background:#3579fd;border-radius:50%"></div>
<div class="t" style="left:479.70px;top:385px;font-size:5.6px;color:#fff;font-weight:bold;">1</div>
<div class="t" style="left:490.10px;top:384px;font-size:5.9px;color:#3579fd;-webkit-text-stroke:0.15px #3579fd;">record</div>
<div class="a" style="left:652px;top:291px;width:149px;height:106.5px;background:#fff;border-radius:2px;box-shadow:0 0.6px 1.2px rgba(0,0,0,0.07)"></div>
<svg style="left:655px;top:298px;" width="15" height="11"><g fill="#0fa0e0"><circle cx="4" cy="3.7" r="2.9"/><circle cx="8.3" cy="3.5" r="2.6"/><circle cx="11" cy="5" r="3"/><circle cx="3.5" cy="7" r="2.7"/><circle cx="7.3" cy="7.4" r="2.4"/><circle cx="10" cy="7" r="2.5"/></g><path d="M4 5.8 H10.5" stroke="#7ccbef" stroke-width="0.6"/></svg>
<svg style="left:769.73px;top:297.70px" width="10.15" height="10.15" viewBox="0 0 24 24" preserveAspectRatio="none"><path d="M15.5 14h-.79l-.28-.27C15.41 12.59 16 11.11 16 9.5 16 5.91 13.09 3 9.5 3S3 5.91 3 9.5 5.91 16 9.5 16c1.61 0 3.09-.59 4.23-1.57l.27.28v.79l5 4.99L20.49 19l-4.99-5zm-6 0C7.01 14 5 11.99 5 9.5S7.01 5 9.5 5 14 7.01 14 9.5 11.99 14 9.5 14zm2.5-4h-2v2H9v-2H7V9h2V7h1v2h2v1z" fill="#a9acb0"/></svg>
<svg style="left:779.36px;top:297.96px" width="11.40" height="11.40" viewBox="0 0 512 512" preserveAspectRatio="none"><path d="M315.27 33L96 304h128l-31.51 173.23a2.36 2.36 0 002.33 2.77h0a2.36 2.36 0 001.89-.95L416 208H288l31.66-173.25a2.45 2.45 0 00-2.44-2.75h0a2.42 2.42 0 00-1.95 1z" fill="#4cd38e"/></svg>
<svg style="left:789.05px;top:298.10px" width="11.30" height="11.30" viewBox="0 0 24 24" preserveAspectRatio="none"><path d="M12 8c1.1 0 2-.9 2-2s-.9-2-2-2-2 .9-2 2 .9 2 2 2zm0 2c-1.1 0-2 .9-2 2s.9 2 2 2 2-.9 2-2-.9-2-2-2zm0 6c-1.1 0-2 .9-2 2s.9 2 2 2 2-.9 2-2-.9-2-2-2z" fill="#8a8d92"/></svg>
<div class="t" style="left:656.20px;top:315px;font-size:6.5px;color:#48505c;font-weight:bold;">Create New Lead in SFDC</div>
<div class="t" style="left:656.20px;top:325px;font-size:5.72px;color:#83878c;-webkit-text-stroke:0.15px #83878c;">ID: 20250 | OWNED BY: shilpa.bhambhwani@nexla.com</div>
<div class="t" style="left:656.20px;top:372px;font-size:5.3px;color:#5f6368;-webkit-text-stroke:0.25px #5f6368;">DATA PROCESSED</div>
<div class="a" style="left:656.2px;top:380.4px;width:36px;height:13.2px;background:#f7f8f9;border-radius:7px"></div>
<div class="a" style="left:656.2px;top:380.4px;width:13.2px;height:13.2px;background:#3579fd;border-radius:50%"></div>
<div class="t" style="left:661.20px;top:385px;font-size:5.6px;color:#fff;font-weight:bold;">1</div>
<div class="t" style="left:671.60px;top:384px;font-size:5.9px;color:#3579fd;-webkit-text-stroke:0.15px #3579fd;">record</div>
<div class="a" style="left:833px;top:291px;width:149px;height:106.5px;background:#fff;border-radius:2px;box-shadow:0 0.6px 1.2px rgba(0,0,0,0.07)"></div>
<svg style="left:834px;top:292px;" width="18" height="16"><g fill="none" stroke-width="1.4" stroke-linecap="round"><path d="M12.4 7 A2.9 2.9 0 1 0 6.9 6.9 L6.2 12.2" stroke="#c9356a"/><path d="M9.3 6.5 L12.4 12.3" stroke="#4a4a4a"/><path d="M12.4 10 A2.7 2.7 0 1 1 11.6 14.5" stroke="#4a4a4a"/><path d="M7.2 12.5 H13" stroke="#4a4a4a"/><path d="M4.8 10.3 A2.7 2.7 0 1 0 8.9 14" stroke="#4a4a4a"/></g><circle cx="6.2" cy="12.2" r="1.1" fill="#c9356a"/></svg>
<svg style="left:961.73px;top:297.70px" width="10.15" height="10.15" viewBox="0 0 24 24" preserveAspectRatio="none"><path d="M15.5 14h-.79l-.28-.27C15.41 12.59 16 11.11 16 9.5 16 5.91 13.09 3 9.5 3S3 5.91 3 9.5 5.91 16 9.5 16c1.61 0 3.09-.59 4.23-1.57l.27.28v.79l5 4.99L20.49 19l-4.99-5zm-6 0C7.01 14 5 11.99 5 9.5S7.01 5 9.5 5 14 7.01 14 9.5 11.99 14 9.5 14zm2.5-4h-2v2H9v-2H7V9h2V7h1v2h2v1z" fill="#a9acb0"/></svg>
<svg style="left:971.26px;top:297.96px" width="11.40" height="11.40" viewBox="0 0 512 512" preserveAspectRatio="none"><path d="M315.27 33L96 304h128l-31.51 173.23a2.36 2.36 0 002.33 2.77h0a2.36 2.36 0 001.89-.95L416 208H288l31.66-173.25a2.45 2.45 0 00-2.44-2.75h0a2.42 2.42 0 00-1.95 1z" fill="#4cd38e"/></svg>
<div class="t" style="left:837.20px;top:314px;font-size:6.5px;color:#48505c;font-weight:bold;">Request responses from: Nexla.my.salesforc...</div>
<div class="t" style="left:837.20px;top:324px;font-size:5.75px;color:#83878c;-webkit-text-stroke:0.15px #83878c;">ID: 22036</div>
<div class="t" style="left:837.20px;top:372px;font-size:5.3px;color:#5f6368;-webkit-text-stroke:0.25px #5f6368;">DATA PROCESSED</div>
<div class="a" style="left:837.2px;top:380.4px;width:36px;height:13.2px;background:#f7f8f9;border-radius:7px"></div>
<div class="a" style="left:837.2px;top:380.4px;width:13.2px;height:13.2px;background:#3579fd;border-radius:50%"></div>
<div class="t" style="left:842.20px;top:385px;font-size:5.6px;color:#fff;font-weight:bold;">1</div>
<div class="t" style="left:852.60px;top:384px;font-size:5.9px;color:#3579fd;-webkit-text-stroke:0.15px #3579fd;">record</div>
<div class="a" style="left:257px;top:348.6px;width:27px;height:1.8px;background:#3579fd;"></div>
<svg style="left:282.2px;top:346.5px;" width="7" height="7"><path d="M0 0 L6.6 3 L0 6Z" fill="#3579fd"/></svg>
<div class="a" style="left:437.8px;top:348.6px;width:27.7px;height:1.8px;background:#3579fd;"></div>
<svg style="left:463.7px;top:346.5px;" width="7" height="7"><path d="M0 0 L6.6 3 L0 6Z" fill="#3579fd"/></svg>
<div class="a" style="left:619.4px;top:348.6px;width:27.6px;height:1.8px;background:#3579fd;"></div>
<svg style="left:645.2px;top:346.5px;" width="7" height="7"><path d="M0 0 L6.6 3 L0 6Z" fill="#3579fd"/></svg>
<div class="a" style="left:800.8px;top:348.6px;width:27.2px;height:1.8px;background:#3579fd;"></div>
<svg style="left:826.2px;top:346.5px;" width="7" height="7"><path d="M0 0 L6.6 3 L0 6Z" fill="#3579fd"/></svg>
<div class="a" style="left:982.4px;top:348.6px;width:20.5px;height:1.8px;background:#3579fd;"></div>
</body></html>
